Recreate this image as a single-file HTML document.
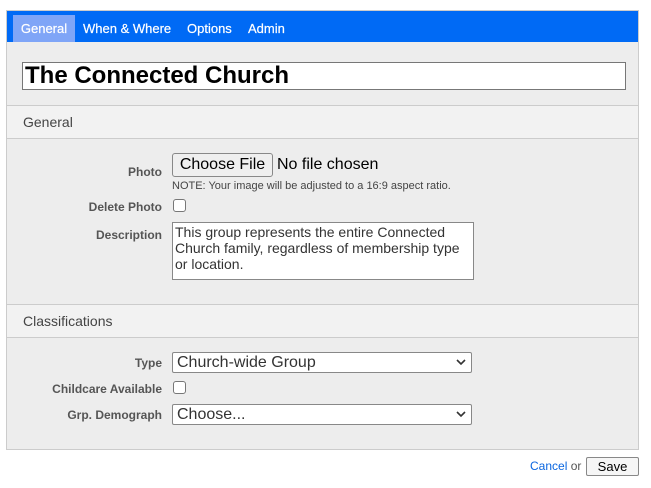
<!DOCTYPE html>
<html><head><style>
*{box-sizing:border-box;margin:0;padding:0}
body{width:651px;height:488px;background:#fff;font-family:"Liberation Sans",Arial,sans-serif;position:relative;overflow:hidden}
.a{position:absolute}
.box{left:6px;top:10px;width:633px;height:440px;border:1px solid #ccc;background:#ededed}
.tabs{left:7px;top:11px;width:631px;height:31px;background:#006af5}
.tab{top:15px;height:27px;color:#fff;font-size:13px;line-height:27px;-webkit-text-stroke:0.2px #fff}
.hdr{left:7px;width:631px;height:34px;background:#f2f2f2;border-top:1px solid #ccc;border-bottom:1px solid #ccc;font-size:14px;color:#444;padding-left:16px;line-height:32px}
.lbl{font-size:12px;font-weight:bold;color:#555;text-align:right;width:160px;left:2px}
.cb{width:13px;height:13px;border:1px solid #777;border-radius:3px;background:#fff}
.sel{left:172px;width:300px;height:21px;border:1px solid #888;border-radius:2px;background:#fff;font-size:16px;color:#333;padding-left:4px;line-height:19px}
.sel svg{position:absolute;right:5px;top:6px}
</style></head><body>
<div class="a box"></div>
<div class="a tabs"></div>
<div class="a tab" style="left:13px;width:62px;background:#7fa5f7;text-align:center">General</div>
<div class="a tab" style="left:83px">When &amp; Where</div>
<div class="a tab" style="left:187px">Options</div>
<div class="a tab" style="left:248px">Admin</div>
<div class="a" style="left:22px;top:62px;width:604px;height:28px;border:1px solid #777;background:#fff;font-size:24px;font-weight:bold;line-height:26px;padding-left:2px;color:#000">The Connected Church</div>
<div class="a hdr" style="top:105px">General</div>
<div class="a lbl" style="top:165px">Photo</div>
<div class="a" style="left:172px;top:153px;width:101px;height:24px;border:1px solid #888;border-radius:3px;background:#efefef;font-size:16px;line-height:22px;text-align:center;color:#000">Choose File</div>
<div class="a" style="left:277px;top:156px;font-size:16px;color:#000">No file chosen</div>
<div class="a" style="left:172px;top:180px;font-size:11px;color:#444">NOTE: Your image will be adjusted to a 16:9 aspect ratio.</div>
<div class="a lbl" style="top:200px">Delete Photo</div>
<div class="a cb" style="left:173px;top:199px"></div>
<div class="a lbl" style="top:228px">Description</div>
<div class="a" style="left:172px;top:222px;width:302px;height:58px;border:1px solid #888;background:#fff;font-size:14px;line-height:16px;color:#333;padding:1px 2px">This group represents the entire Connected Church family, regardless of membership type or location.</div>
<div class="a hdr" style="top:304px">Classifications</div>
<div class="a lbl" style="top:356px">Type</div>
<div class="a sel" style="top:352px">Church-wide Group<svg width="10" height="7"><path d="M1 1l4 4 4-4" stroke="#333" stroke-width="1.6" fill="none"/></svg></div>
<div class="a lbl" style="top:382px">Childcare Available</div>
<div class="a cb" style="left:173px;top:381px"></div>
<div class="a lbl" style="top:408px">Grp. Demograph</div>
<div class="a sel" style="top:404px">Choose...<svg width="10" height="7"><path d="M1 1l4 4 4-4" stroke="#333" stroke-width="1.6" fill="none"/></svg></div>
<div class="a" style="left:530px;top:459px;font-size:12px;color:#555"><span style="color:#0a66e0">Cancel</span> or</div>
<div class="a" style="left:586px;top:457px;width:53px;height:19px;border:1px solid #888;border-radius:2px;background:#f6f6f6;font-size:13px;text-align:center;line-height:17px;color:#000">Save</div>
</body></html>
